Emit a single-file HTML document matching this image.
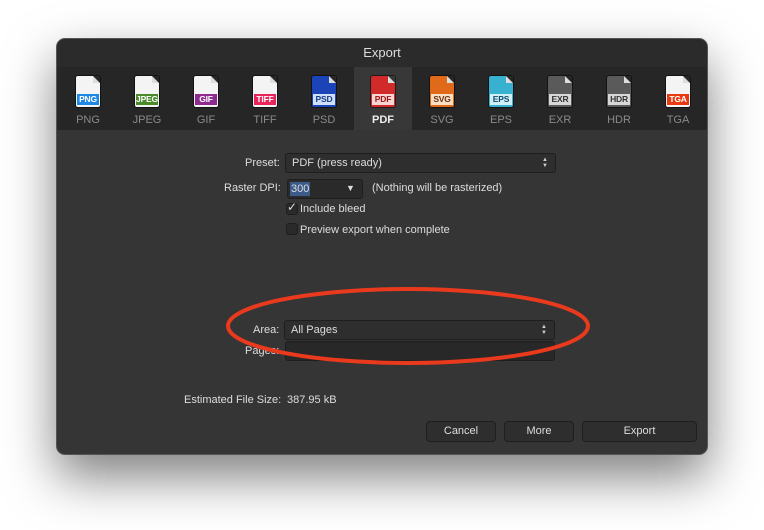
<!DOCTYPE html><html><head><style>
body{margin:0;width:764px;height:530px;background:#fff;font-family:"Liberation Sans",sans-serif;position:relative;overflow:hidden}
.win{position:absolute;left:56px;top:38px;width:652px;height:417px;background:#353535;border-radius:9px;box-shadow:0 22px 50px rgba(0,0,0,.5);border:1px solid #555;box-sizing:border-box;overflow:hidden}
.title{position:absolute;top:0;left:0;right:0;height:28px;background:#2b2b2b;color:#ddd;font-size:13px;text-align:center;line-height:28px}
.bar{position:absolute;top:28px;left:0;right:0;height:63px;background:#262626}
.tab{position:absolute;top:0;width:58px;height:63px}
.tab.sel{background:#383838}
.doc{position:absolute;left:17px;top:9px;width:24px;height:31px;border-radius:2px;box-shadow:0 0 0 1px rgba(0,0,0,.5)}
.fold{position:absolute;right:0;top:0;width:0;height:0;border-left:7px solid #ddd;border-top:7px solid #262626}
.tab.sel .fold{border-top-color:#383838}
.band{position:absolute;left:1px;right:1px;top:18px;height:11px;font-size:8.5px;font-weight:bold;text-align:center;line-height:11px;letter-spacing:-.2px;overflow:hidden}
.lab{position:absolute;top:47px;left:0;width:58px;text-align:center;color:#8a8a8a;font-size:11px}
.tab.sel .lab{color:#eee;font-weight:bold}
.t{position:absolute;color:#ddd;font-size:11px}
.f{position:absolute;background:#2a2a2a;border:1px solid #1e1e1e;border-radius:3px;box-sizing:border-box;color:#ddd;font-size:11px}
.btn{position:absolute;top:382px;height:21px;background:#2e2e2e;border:1px solid #1e1e1e;border-radius:4px;box-sizing:border-box;color:#ddd;font-size:11px;text-align:center;line-height:19px}
.arr{position:absolute;right:7px;top:3px;font-size:6px;line-height:6px;color:#ccc}
</style></head><body>
<div class="win">
<div class="title">Export</div>
<div class="bar">
<div class="tab" style="left:2px"><div class="doc" style="background:#f4f4f4"><div class="fold"></div><div class="band" style="background:#1e88e5;color:#fff">PNG</div></div><div class="lab">PNG</div></div>
<div class="tab" style="left:61px"><div class="doc" style="background:#f4f4f4"><div class="fold"></div><div class="band" style="background:#4a8a2a;color:#fff">JPEG</div></div><div class="lab">JPEG</div></div>
<div class="tab" style="left:120px"><div class="doc" style="background:#f4f4f4"><div class="fold"></div><div class="band" style="background:#8e2a90;color:#fff">GIF</div></div><div class="lab">GIF</div></div>
<div class="tab" style="left:179px"><div class="doc" style="background:#f4f4f4"><div class="fold"></div><div class="band" style="background:#e8245a;color:#fff">TIFF</div></div><div class="lab">TIFF</div></div>
<div class="tab" style="left:238px"><div class="doc" style="background:#1a44b8"><div class="fold"></div><div class="band" style="background:#cfe0f8;color:#1a3a8a">PSD</div></div><div class="lab">PSD</div></div>
<div class="tab sel" style="left:297px"><div class="doc" style="background:#d02a2a"><div class="fold"></div><div class="band" style="background:#f8d4d4;color:#a01818">PDF</div></div><div class="lab">PDF</div></div>
<div class="tab" style="left:356px"><div class="doc" style="background:#e06a1a"><div class="fold"></div><div class="band" style="background:#fbe0c8;color:#6a3010">SVG</div></div><div class="lab">SVG</div></div>
<div class="tab" style="left:415px"><div class="doc" style="background:#38b0d0"><div class="fold"></div><div class="band" style="background:#d0f0f8;color:#104a6a">EPS</div></div><div class="lab">EPS</div></div>
<div class="tab" style="left:474px"><div class="doc" style="background:#5a5a5a"><div class="fold"></div><div class="band" style="background:#d8d8d8;color:#333">EXR</div></div><div class="lab">EXR</div></div>
<div class="tab" style="left:533px"><div class="doc" style="background:#5a5a5a"><div class="fold"></div><div class="band" style="background:#d8d8d8;color:#333">HDR</div></div><div class="lab">HDR</div></div>
<div class="tab" style="left:592px"><div class="doc" style="background:#f4f4f4"><div class="fold"></div><div class="band" style="background:#e83a10;color:#fff">TGA</div></div><div class="lab">TGA</div></div>
</div>
<div class="t" style="left:188px;top:118px">Preset:</div>
<div class="f" style="left:228px;top:114px;width:271px;height:20px;padding:3px 0 0 6px;background:#2e2e2e">PDF (press ready)<div class="arr">▲<br>▼</div></div>
<div class="t" style="left:167px;top:143px">Raster DPI:</div>
<div class="f" style="left:230px;top:140px;width:76px;height:20px"><span style="position:absolute;left:2px;top:2px;background:#3c5a8a;padding:1px 1px">300</span><span style="position:absolute;left:58px;top:3px;font-size:9px">▼</span></div>
<div class="t" style="left:315px;top:143px">(Nothing will be rasterized)</div>
<div class="f" style="left:229px;top:164px;width:12px;height:12px;border-radius:3px"></div><div class="t" style="left:230px;top:161px;font-size:12px">✓</div>
<div class="t" style="left:243px;top:164px">Include bleed</div>
<div class="f" style="left:229px;top:184px;width:12px;height:12px;border-radius:3px"></div>
<div class="t" style="left:243px;top:185px">Preview export when complete</div>
<div class="t" style="left:196px;top:285px">Area:</div>
<div class="f" style="left:227px;top:281px;width:271px;height:20px;padding:3px 0 0 6px;background:#2e2e2e">All Pages<div class="arr">▲<br>▼</div></div>
<div class="t" style="left:188px;top:306px">Pages:</div>
<div class="f" style="left:228px;top:302px;width:270px;height:20px;background:#282828"></div>
<div class="t" style="left:127px;top:355px">Estimated File Size:</div>
<div class="t" style="left:230px;top:355px">387.95 kB</div>
<div class="btn" style="left:369px;width:70px">Cancel</div>
<div class="btn" style="left:447px;width:70px">More</div>
<div class="btn" style="left:525px;width:115px">Export</div>
</div>
<svg style="position:absolute;left:0;top:0" width="764" height="530"><ellipse cx="408" cy="326" rx="180" ry="37" fill="none" stroke="#ea3a1e" stroke-width="4"/></svg>
</body></html>
